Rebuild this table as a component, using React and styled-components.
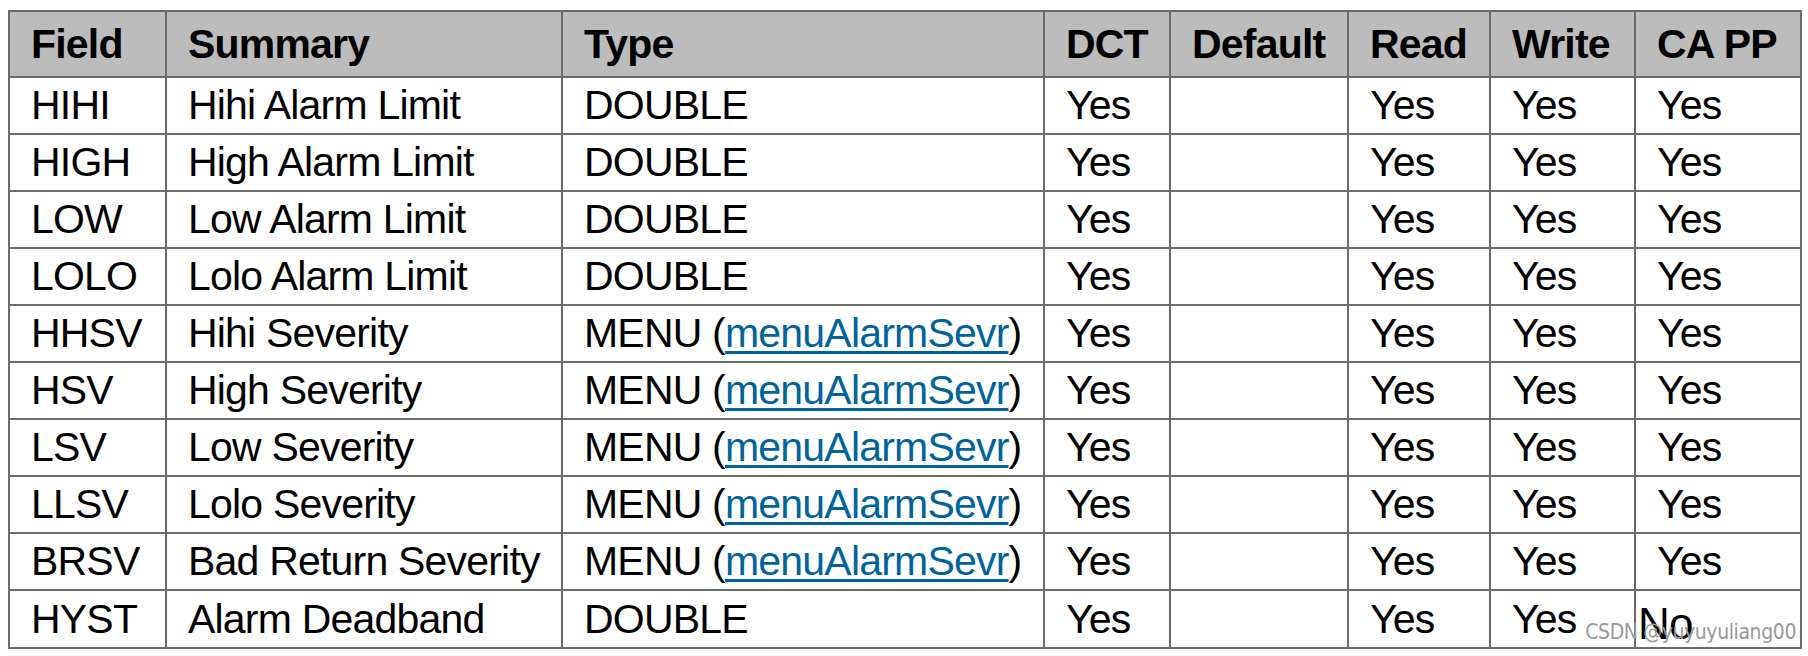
import React from "react";
import styled, { createGlobalStyle } from "styled-components";

const Global = createGlobalStyle`
  html, body { margin: 0; padding: 0; background: #ffffff; }
  body { font-family: "Liberation Sans", Arial, sans-serif; }
`;

const Page = styled.div`
  position: relative;
  width: 1808px;
  height: 656px;
  padding: 10px 8px 0 8px;
  box-sizing: border-box;
  background: #fff;
`;

const Table = styled.table`
  border-collapse: collapse;
  table-layout: fixed;
  width: 1792px;
  font-family: "Liberation Sans", Arial, sans-serif;
  font-size: 41px;
  letter-spacing: -0.8px;
  color: #000;
`;

const HeadCell = styled.th`
  background: #bcbcbc;
  border: 2px solid #6b6b6b;
  height: 64px;
  padding: 0 0 0 21px;
  text-align: left;
  font-weight: bold;
  vertical-align: middle;
  line-height: 1;
`;

const Cell = styled.td`
  border: 2px solid #6b6b6b;
  height: 55px;
  padding: ${(p) => (p.$tight ? "0 0 1px 2px" : "0 0 0 21px")};
  font-size: ${(p) => (p.$tight ? "44px" : "inherit")};
  text-align: left;
  vertical-align: ${(p) => (p.$tight ? "bottom" : "middle")};
  line-height: 1;
  white-space: nowrap;
  overflow: visible;
`;

const Link = styled.a`
  color: #00649a;
  text-decoration: underline;
  text-decoration-thickness: 3px;
  text-underline-offset: 4px;
`;

const Watermark = styled.div`
  position: absolute;
  right: 12px;
  bottom: 13px;
  font-family: "DejaVu Sans Condensed", "DejaVu Sans", sans-serif;
  font-size: 21px;
  line-height: 1;
  color: #9a9a9a;
  letter-spacing: -0.4px;
`;

const widths = [157, 396, 482, 126, 178, 142, 145, 166];
const headers = ["Field", "Summary", "Type", "DCT", "Default", "Read", "Write", "CA PP"];

const rows = [
  ["HIHI", "Hihi Alarm Limit", "DOUBLE", "Yes"],
  ["HIGH", "High Alarm Limit", "DOUBLE", "Yes"],
  ["LOW", "Low Alarm Limit", "DOUBLE", "Yes"],
  ["LOLO", "Lolo Alarm Limit", "DOUBLE", "Yes"],
  ["HHSV", "Hihi Severity", "MENU", "Yes"],
  ["HSV", "High Severity", "MENU", "Yes"],
  ["LSV", "Low Severity", "MENU", "Yes"],
  ["LLSV", "Lolo Severity", "MENU", "Yes"],
  ["BRSV", "Bad Return Severity", "MENU", "Yes"],
  ["HYST", "Alarm Deadband", "DOUBLE", "No"],
];

export default function App() {
  return (
    <Page>
      <Global />
      <Table>
        <colgroup>
          {widths.map((w, i) => (
            <col key={i} style={{ width: w }} />
          ))}
        </colgroup>
        <thead>
          <tr>
            {headers.map((h) => (
              <HeadCell key={h}>{h}</HeadCell>
            ))}
          </tr>
        </thead>
        <tbody>
          {rows.map(([field, summary, type, capp]) => (
            <tr key={field}>
              <Cell>{field}</Cell>
              <Cell>{summary}</Cell>
              <Cell>
                {type === "MENU" ? (
                  <>
                    MENU (<Link href="#">menuAlarmSevr</Link>)
                  </>
                ) : (
                  type
                )}
              </Cell>
              <Cell>Yes</Cell>
              <Cell></Cell>
              <Cell>Yes</Cell>
              <Cell>Yes</Cell>
              <Cell $tight={capp === "No"}>{capp}</Cell>
            </tr>
          ))}
        </tbody>
      </Table>
      <Watermark>CSDN @yuyuyuliang00</Watermark>
    </Page>
  );
}
